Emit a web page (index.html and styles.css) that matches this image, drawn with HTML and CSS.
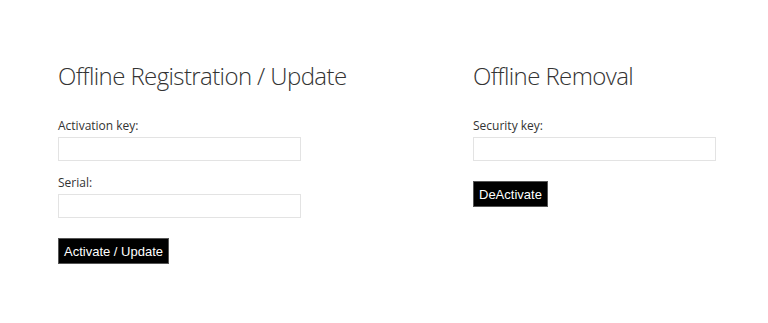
FILE: index.html
```html
<!DOCTYPE html>
<html>
<head>
  <title>Offline Registration</title>
  <link rel="stylesheet" href="styles.css">
</head>
<body>
  <div class="page">
    <div class="panel">
      <h2 class="title">Offline Registration / Update</h2>
      <div class="field">
        <label for="activationKey">Activation key:</label>
        <input type="text" id="activationKey" class="textfield">
      </div>
      <div class="field">
        <label for="serial">Serial:</label>
        <input type="text" id="serial" class="textfield">
      </div>
      <button class="action">Activate / Update</button>
    </div>
    <div class="panel">
      <h2 class="title">Offline Removal</h2>
      <div class="field">
        <label for="securityKey">Security key:</label>
        <input type="text" id="securityKey" class="textfield">
      </div>
      <button class="action">DeActivate</button>
    </div>
  </div>
</body>
</html>
```

FILE: styles.css
```css
body {
  margin: 0;
  background: #fff;
  font-family: "Open Sans", "Noto Sans", sans-serif;
  color: #333;
}

.page {
  display: grid;
  grid-template-columns: 415px 1fr;
  padding: 58px 0 0 58px;
}

.title {
  font-weight: 300;
  font-size: 24px;
  letter-spacing: -0.6px;
  line-height: 36px;
  margin: 0 0 23px 0;
  color: #333;
}

.field {
  margin-bottom: 13px;
}

.field label {
  display: block;
  font-size: 12px;
  line-height: 18px;
  margin-bottom: 2px;
  color: #333;
}

.textfield {
  display: block;
  box-sizing: border-box;
  width: 243px;
  height: 24px;
  margin: 0;
  border: 1px solid #e3e3e3;
  outline: none;
}

.action {
  margin-top: 7px;
  background: #000;
  color: #fff;
  border: 1px solid #555;
  font-family: "Liberation Sans", Arial, sans-serif;
  font-size: 13px;
  height: 26px;
  padding: 0 5px;
  cursor: pointer;
}
```
